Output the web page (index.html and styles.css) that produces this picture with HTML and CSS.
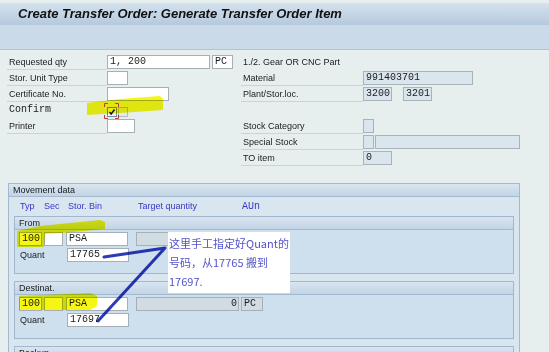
FILE: index.html
```html
<!DOCTYPE html>
<html>
  <head>
    <meta charset=utf-8>
    <title>Create Transfer Order</title>
    <link rel="stylesheet" href="styles.css">
  </head>
  <body>
    <div id="titlebar"><h1>Create Transfer Order: Generate Transfer Order Item</h1></div>
    <div id="toolbar"></div>
    <div id="screen">
      <div class="head">
        <div class="col">
          <div class="row"><p class="lbl">Requested qty</p><span class="in mono w103">1, 200</span><span class="in mono w21">PC</span></div>
          <div class="row"><p class="lbl">Stor. Unit Type</p><span class="in w21"></span></div>
          <div class="row"><p class="lbl">Certificate No.</p><span class="in w62"></span></div>
          <div class="row"><p class="lbl plain mono">Confirm</p><span class="check"><svg width="8" height="8" viewBox="0 0 8 8"><polyline points="1.5,4 3.2,6 6.5,1.5"/></svg></span><span class="check off"></span></div>
          <div class="row"><p class="lbl">Printer</p><span class="in w28"></span></div>
        </div>
        <div class="col right">
          <div class="row"><p class="note">1./2. Gear OR CNC Part</p></div>
          <div class="row"><p class="lbl wide">Material</p><span class="in ro mono w110">991403701</span></div>
          <div class="row"><p class="lbl wide">Plant/Stor.loc.</p><span class="in ro mono w29 sep">3200</span><span class="in ro mono w29">3201</span></div>
          <div class="row"></div>
          <div class="row"><p class="lbl wide">Stock Category</p><span class="in ro w11"></span></div>
          <div class="row"><p class="lbl wide">Special Stock</p><span class="in ro w11 tight"></span><span class="in ro w144"></span></div>
          <div class="row"><p class="lbl wide">TO item</p><span class="in ro mono w29">0</span></div>
        </div>
      </div>

      <div class="group" id="movement">
        <h2>Movement data</h2>
        <div class="colheads">
          <span class="c-typ">Typ</span>
          <span class="c-sec">Sec</span>
          <span class="c-bin">Stor. Bin</span>
          <span class="c-qty">Target quantity</span>
          <span class="mono">AUn</span>
        </div>
        <div class="group sub">
          <h2>From</h2>
          <div class="subbody">
            <div class="row">
              <span class="in mono f-typ">100</span><span class="in f-sec"></span><span class="in mono f-bin">PSA</span><span class="in grey mono f-qty"></span><span class="in grey mono f-un"></span>
            </div>
            <div class="row"><p class="qlbl">Quant</p><span class="in mono f-bin">17765</span></div>
          </div>
        </div>
        <div class="group sub">
          <h2>Destinat.</h2>
          <div class="subbody">
            <div class="row">
              <span class="in mono f-typ">100</span><span class="in f-sec"></span><span class="in mono f-bin">PSA</span><span class="in grey mono f-qty num">0</span><span class="in grey mono f-un">PC</span>
            </div>
            <div class="row"><p class="qlbl">Quant</p><span class="in mono f-bin">17697</span></div>
          </div>
        </div>
        <div class="group sub">
          <h2>Backup</h2>
          <div class="subbody"></div>
        </div>
      </div>
    </div>

    <div id="callout">这里手工指定好Quant的<br>号码，从17765 搬到<br>17697.</div>

    <svg id="marks" width="549" height="352" viewBox="0 0 549 352">
      <g class="hl">
        <polygon points="87,103 120,99 160,96 163,99 163,110 120,113 87,115"/>
        <polygon points="17,231 40,226 100,220 105,222 105,229 62,233 45,234 44,247 17,247"/>
        <polygon points="19,296 90,293 97,296 97,306 90,310 19,310"/>
      </g>
      <path class="corners" d="M104.5,107 V103.5 H108 M115,103.5 H118.5 V107 M118.5,115 V118.5 H115 M108,118.5 H104.5 V115"/>
      <polyline class="arrow" points="104,257 165,248 98,321"/>
    </svg>
  </body>
</html>
```

FILE: styles.css
```css
body {
  margin: 0;
  width: 549px;
  height: 352px;
  overflow: hidden;
  position: relative;
  background: #e7eeee;
  font-family: "Liberation Sans", Arial, sans-serif;
  font-size: 9px;
  color: #1b1b1b;
}

#titlebar {
  margin-top: 3px;
  height: 22px;
  background: linear-gradient(#d5e2ee, #b5c9dd);
}
#titlebar h1 {
  margin: 0;
  padding-left: 18px;
  font: italic bold 13px/22px "Liberation Sans", Arial, sans-serif;
  color: #111;
}
#toolbar {
  height: 24px;
  background: #cbdae8;
  border-bottom: 1px solid #b4c3cf;
}

p { margin: 0; }

.mono {
  font-family: "Liberation Mono", monospace;
  font-size: 10px;
}

/* header fields */
.head {
  display: flex;
  padding: 5px 0 0 7px;
}
.col { width: 234px; flex-shrink: 0; }
.col.right { width: auto; flex: 1; }
.row {
  display: flex;
  align-items: flex-start;
  height: 16px;
}
.row > * { flex-shrink: 0; }
.lbl {
  width: 100px;
  height: 15px;
  line-height: 14px;
  padding-left: 2px;
  box-sizing: border-box;
  border-bottom: 1px solid #cbd3d4;
  white-space: nowrap;
}
.lbl.wide { width: 122px; }
.lbl.plain { border-bottom: none; }
.note {
  padding-left: 2px;
  line-height: 14px;
}

.in {
  display: block;
  height: 14px;
  box-sizing: border-box;
  border: 1px solid #a6afb7;
  background: #fff;
  margin-right: 2px;
  padding-left: 2px;
  line-height: 12px;
  white-space: pre;
  overflow: hidden;
}
.in.ro {
  background: #dae6ee;
  border-color: #a9b2b9;
}
.in.grey {
  background: #d0dbe2;
  border-color: #a6afb6;
}
.in.num {
  text-align: right;
  padding: 0 1px 0 0;
}
.w11 { width: 11px; }
.w21 { width: 21px; }
.w28 { width: 28px; }
.w29 { width: 29px; }
.w62 { width: 62px; }
.w103 { width: 103px; }
.w110 { width: 110px; }
.w144 { width: 145px; }
.sep { margin-right: 11px; }
.tight { margin-right: 1px; }

.check {
  width: 10px;
  height: 10px;
  margin: 4px 1px 0 0;
  box-sizing: border-box;
  border: 1px solid #7d8d9c;
  background: #eef4f8;
  display: flex;
  align-items: center;
  justify-content: center;
}
.check svg polyline {
  fill: none;
  stroke: #111;
  stroke-width: 1.4;
}
.check.off {
  border-color: #b3bbc2;
  background: #e2e9ed;
}

/* movement data */
.group {
  border: 1px solid #a3b9cf;
}
.group > h2 {
  margin: 0;
  height: 13px;
  box-sizing: border-box;
  padding-left: 4px;
  font: normal 9px/12px "Liberation Sans", Arial, sans-serif;
  color: #1b1b1b;
  background: linear-gradient(#d9e5f0, #c2d4e6);
  border-bottom: 1px solid #a3b9cf;
}
#movement {
  margin: 16px 0 0 8px;
  width: 512px;
  height: 200px;
  box-sizing: border-box;
  background: #d9e6ef;
}
.colheads {
  display: flex;
  height: 19px;
  line-height: 19px;
  padding-left: 11px;
  color: #3838c8;
}
.c-typ { width: 24px; }
.c-sec { width: 24px; }
.c-bin { width: 70px; }
.c-qty { width: 104px; }

.sub {
  margin: 0 5px 7px;
  background: #cedfee;
  border-color: #a0b7ce;
}
.subbody {
  padding: 2px 0 9px 4px;
}
.f-typ { width: 23px; }
.f-sec { width: 19px; margin-right: 3px; }
.f-bin { width: 62px; margin-right: 8px; }
.f-qty { width: 103px; }
.f-un { width: 22px; }
.qlbl {
  width: 47px;
  padding-left: 1px;
  line-height: 14px;
}

/* annotations */
#callout {
  position: absolute;
  left: 168px;
  top: 232px;
  width: 122px;
  height: 61px;
  box-sizing: border-box;
  padding: 2px 0 0 1px;
  background: #fff;
  font: 11px/19px "Noto Sans CJK SC", sans-serif;
  color: #5353c9;
  white-space: nowrap;
}
#marks {
  position: absolute;
  top: 0;
  left: 0;
  pointer-events: none;
  mix-blend-mode: multiply;
}
.hl polygon { fill: #f6f614; }
.corners {
  fill: none;
  stroke: #e23a3a;
  stroke-width: 1;
}
.arrow {
  fill: none;
  stroke: #2d3bb8;
  stroke-width: 3;
  stroke-linecap: round;
  stroke-linejoin: round;
}
```
